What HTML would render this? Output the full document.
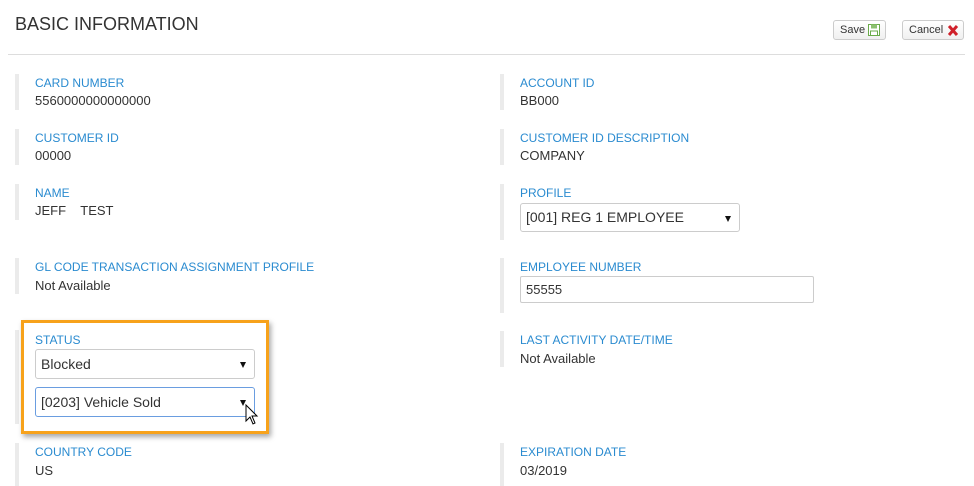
<!DOCTYPE html>
<html><head><style>
body{margin:0;width:974px;height:486px;background:#fff;font-family:"Liberation Sans",Arial,sans-serif;position:relative;overflow:hidden}
.a{position:absolute}
.bar{position:absolute;width:4px;background:#ebebeb}
.lbl{position:absolute;font-size:12px;color:#2a8bd0;line-height:14px}
.val{position:absolute;font-size:13px;color:#333;line-height:15px}
.inp{position:absolute;border:1px solid #ccc;border-radius:3px;background:#fff;font-size:14px;color:#333;box-sizing:border-box;padding-left:5px}
.sel:after{content:"";position:absolute;right:8px;top:50%;margin-top:-2px;border-left:3.5px solid transparent;border-right:3.5px solid transparent;border-top:6px solid #111}
.btn{position:absolute;border:1px solid #ccc;border-radius:3px;background:linear-gradient(#fff,#f0f0f0);font-size:11px;color:#333;box-sizing:border-box;height:20px;line-height:18px;padding-left:6px}
</style></head><body>
<div class="a" style="left:15px;top:14px;font-size:18px;color:#333">BASIC INFORMATION</div>
<div class="btn" style="left:833px;top:20px;width:53px">Save
<svg class="a" style="left:34px;top:3px" width="12" height="12" viewBox="0 0 12 12"><rect x="0.5" y="0.5" width="11" height="11" fill="#fff" stroke="#6aab4a"/><rect x="3" y="0.5" width="6" height="4" fill="#8cc070"/><rect x="2.5" y="7" width="7" height="4.5" fill="#fff" stroke="#6aab4a"/></svg></div>
<div class="btn" style="left:902px;top:20px;width:62px">Cancel
<svg class="a" style="left:45px;top:4px" width="10" height="11" viewBox="0 0 10 11"><path d="M1 1L9 10M9 1L1 10" stroke="#d0202a" stroke-width="3"/></svg></div>
<div class="a" style="left:8px;top:54px;width:957px;height:1px;background:#ddd"></div>

<div class="bar" style="left:15px;top:74px;height:36px"></div>
<div class="lbl" style="left:35px;top:76px">CARD NUMBER</div><div class="val" style="left:35px;top:93px">5560000000000000</div>
<div class="bar" style="left:500px;top:74px;height:36px"></div>
<div class="lbl" style="left:520px;top:76px">ACCOUNT ID</div><div class="val" style="left:520px;top:93px">BB000</div>

<div class="bar" style="left:15px;top:129px;height:36px"></div>
<div class="lbl" style="left:35px;top:131px">CUSTOMER ID</div><div class="val" style="left:35px;top:148px">00000</div>
<div class="bar" style="left:500px;top:129px;height:36px"></div>
<div class="lbl" style="left:520px;top:131px">CUSTOMER ID DESCRIPTION</div><div class="val" style="left:520px;top:148px">COMPANY</div>

<div class="bar" style="left:15px;top:184px;height:36px"></div>
<div class="lbl" style="left:35px;top:186px">NAME</div><div class="val" style="left:35px;top:203px">JEFF&nbsp;&nbsp;&nbsp; TEST</div>
<div class="bar" style="left:500px;top:184px;height:56px"></div>
<div class="lbl" style="left:520px;top:186px">PROFILE</div>
<div class="inp sel" style="left:520px;top:203px;width:220px;height:29px;line-height:27px">[001] REG 1 EMPLOYEE</div>

<div class="bar" style="left:15px;top:258px;height:36px"></div>
<div class="lbl" style="left:35px;top:260px">GL CODE TRANSACTION ASSIGNMENT PROFILE</div><div class="val" style="left:35px;top:278px">Not Available</div>
<div class="bar" style="left:500px;top:258px;height:55px"></div>
<div class="lbl" style="left:520px;top:260px">EMPLOYEE NUMBER</div>
<div class="inp" style="left:520px;top:276px;width:294px;height:27px;line-height:25px;font-size:13px;border-radius:2px">55555</div>

<div class="bar" style="left:15px;top:330px;height:94px"></div>
<div class="a" style="left:21px;top:320px;width:248px;height:114px;box-sizing:border-box;border:3px solid #f7a21b;background:#fff;box-shadow:2px 3px 5px rgba(0,0,0,.35)"></div>
<div class="lbl" style="left:35px;top:333px">STATUS</div>
<div class="inp sel" style="left:35px;top:349px;width:220px;height:30px;line-height:28px">Blocked</div>
<div class="inp sel" style="left:35px;top:387px;width:220px;height:30px;line-height:28px;border-color:#6a9de0">[0203] Vehicle Sold</div>
<svg class="a" style="left:245px;top:404px" width="14" height="22" viewBox="0 0 14 22"><path d="M1 1L1 17L5 13L8 20L10 19L7 12L12 12Z" fill="#fff" stroke="#000" stroke-width="1"/></svg>
<div class="bar" style="left:500px;top:331px;height:36px"></div>
<div class="lbl" style="left:520px;top:333px">LAST ACTIVITY DATE/TIME</div><div class="val" style="left:520px;top:351px">Not Available</div>

<div class="bar" style="left:15px;top:443px;height:43px"></div>
<div class="lbl" style="left:35px;top:445px">COUNTRY CODE</div><div class="val" style="left:35px;top:463px">US</div>
<div class="bar" style="left:500px;top:443px;height:43px"></div>
<div class="lbl" style="left:520px;top:445px">EXPIRATION DATE</div><div class="val" style="left:520px;top:463px">03/2019</div>
</body></html>
